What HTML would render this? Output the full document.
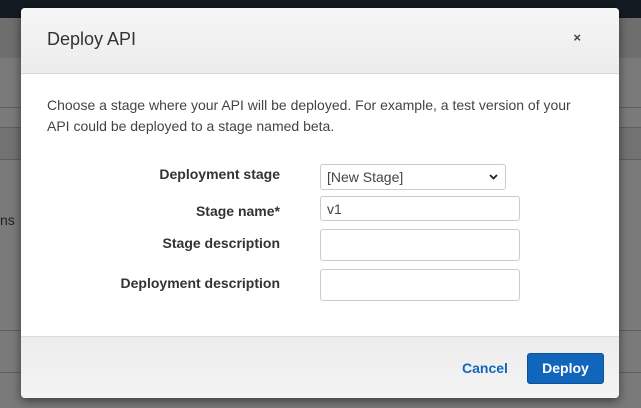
<!DOCTYPE html>
<html><head><style>
*{box-sizing:border-box}
body{margin:0;width:641px;height:408px;position:relative;overflow:hidden;background:#7a7a7a;font-family:"Liberation Sans",Arial,sans-serif}
.bg{position:absolute;left:0;right:0}
.m{position:absolute;left:21px;top:8px;width:598px;height:390px;background:#fff;border-radius:4px;box-shadow:0 3px 10px rgba(0,0,0,.5);overflow:hidden}
.h{height:66px;background:linear-gradient(#f6f6f6,#ececec);border-bottom:1px solid #d6d6d6;position:relative}
.h .t{position:absolute;left:26px;top:21px;font-size:18px;color:#333}
.h .x{position:absolute;right:38px;top:22px;font-size:13px;font-weight:bold;color:#444}
.d{position:absolute;left:26px;top:87px;font-size:14px;line-height:21px;color:#444;width:532px}
.l{position:absolute;right:339px;font-size:14px;font-weight:bold;color:#333;text-align:right;white-space:nowrap}
.i{position:absolute;left:299px;border:1px solid #ccc;border-radius:3px;background:#fff;font-size:14px;color:#444;padding:4px 6px}
.f{position:absolute;left:0;right:0;top:328px;bottom:0;background:linear-gradient(#ececec,#f4f4f4);border-top:1px solid #ddd}
.c{position:absolute;left:441px;top:23px;font-size:14px;font-weight:bold;color:#1166bb}
.b{position:absolute;left:506px;top:16px;width:77px;height:31px;background:#1166bb;border:1px solid #0b5299;border-radius:3px;color:#fff;font-weight:bold;font-size:14px;text-align:center;line-height:29px}
</style></head><body>
<div class="bg" style="top:0;height:18px;background:#141a22"></div>
<div class="bg" style="top:18px;height:40px;background:#6e6e6e"></div>
<div class="bg" style="top:107px;height:1px;background:#5e5e5e"></div>
<div class="bg" style="top:127px;height:33px;background:#727272;border-top:1px solid #5e5e5e;border-bottom:1px solid #5e5e5e"></div>
<div class="bg" style="top:330px;height:1px;background:#5e5e5e"></div>
<div class="bg" style="top:372px;height:1px;background:#5e5e5e"></div>
<div style="position:absolute;left:0;top:212px;font-size:14px;color:#222">ns</div>
<div class="m">
<div class="h"><div class="t">Deploy API</div><div class="x">×</div></div>
<div class="d">Choose a stage where your API will be deployed. For example, a test version of your API could be deployed to a stage named beta.</div>
<div class="l" style="top:158px">Deployment stage</div>
<div class="i" style="top:156px;width:186px;height:26px;padding-top:4px">[New Stage]<svg style="position:absolute;right:7px;top:9px" width="9" height="6" viewBox="0 0 9 6"><path d="M1 1L4.5 4.5L8 1" fill="none" stroke="#222" stroke-width="1.8"/></svg></div>
<div class="l" style="top:195px">Stage name*</div>
<div class="i" style="top:188px;width:200px;height:25px">v1</div>
<div class="l" style="top:227px">Stage description</div>
<div class="i" style="top:221px;width:200px;height:32px"></div>
<div class="l" style="top:267px">Deployment description</div>
<div class="i" style="top:261px;width:200px;height:32px"></div>
<div class="f"><div class="c">Cancel</div><div class="b">Deploy</div></div>
</div>
</body></html>
